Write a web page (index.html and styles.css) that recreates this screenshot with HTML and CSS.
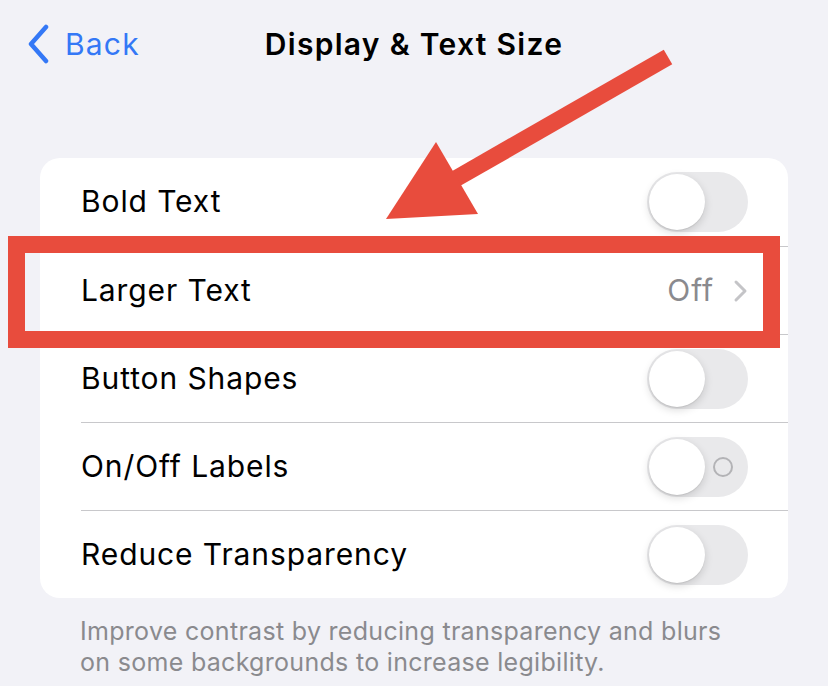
FILE: index.html
```html
<!DOCTYPE html>
<html lang="en">
<head>
    <meta charset="UTF-8">
    <meta name="viewport" content="width=device-width, initial-scale=1.0">
    <title>Display &amp; Text Size</title>
    <link rel="stylesheet" href="styles.css">
</head>
<body>
    <header class="nav">
        <a class="back" href="#">
            <svg class="back-icon" width="24" height="40" viewBox="0 0 24 40">
                <path d="M20 3 L5 20 L20 37" fill="none" stroke="#3478f6" stroke-width="4.5" stroke-linecap="round" stroke-linejoin="round"/>
            </svg>
            <span>Back</span>
        </a>
        <h1 class="title">Display &amp; Text Size</h1>
    </header>

    <section class="group">
        <div class="row">
            <div class="row-body">
                <span class="label">Bold Text</span>
                <span class="switch"><span class="knob"></span></span>
            </div>
        </div>
        <div class="row">
            <div class="row-body">
                <span class="label">Larger Text</span>
                <span class="detail">
                    <span class="value">Off</span>
                    <svg class="chevron" width="16" height="24" viewBox="0 0 16 24">
                        <path d="M3 3 L12 12 L3 21" fill="none" stroke="#c4c4c7" stroke-width="3" stroke-linecap="round" stroke-linejoin="round"/>
                    </svg>
                </span>
            </div>
        </div>
        <div class="row">
            <div class="row-body">
                <span class="label">Button Shapes</span>
                <span class="switch"><span class="knob"></span></span>
            </div>
        </div>
        <div class="row">
            <div class="row-body">
                <span class="label">On/Off Labels</span>
                <span class="switch"><span class="knob"></span><span class="off-mark"></span></span>
            </div>
        </div>
        <div class="row">
            <div class="row-body">
                <span class="label">Reduce Transparency</span>
                <span class="switch"><span class="knob"></span></span>
            </div>
        </div>
    </section>

    <p class="footnote">Improve contrast by reducing transparency and blurs on some backgrounds to increase legibility.</p>

    <!-- red markup drawn on top of the settings -->
    <div class="highlight"></div>
    <svg class="arrow" width="828" height="686" viewBox="0 0 828 686">
        <line x1="668" y1="57" x2="450" y2="182" stroke="#e84c3d" stroke-width="17"/>
        <polygon points="436,142 478,214 386,219" fill="#e84c3d"/>
    </svg>
</body>
</html>
```

FILE: styles.css
```css
body {
    margin: 0;
    background: #f2f2f7;
    font-family: Inter, "Noto Sans", sans-serif;
    color: #000;
    position: relative;
    height: 686px;
    overflow: hidden;
}
.nav {
    display: flex;
    align-items: center;
    justify-content: center;
    height: 90px;
    position: relative;
}
.back {
    position: absolute;
    left: 26px;
    top: 24px;
    display: flex;
    align-items: center;
    gap: 15px;
    color: #3478f6;
    text-decoration: none;
    font-size: 30px;
    letter-spacing: 1.2px;
}
.title {
    margin: 0 0 2px;
    font-size: 30px;
    font-weight: 600;
    letter-spacing: 1.3px;
}
.group {
    margin: 68px 40px 0;
    background: #fff;
    border-radius: 20px;
    overflow: hidden;
}
.row {
    padding-left: 41px;
}
.row-body {
    display: flex;
    align-items: center;
    justify-content: space-between;
    height: 88px;
    padding-right: 40px;
    box-sizing: border-box;
}
.row + .row .row-body {
    border-top: 1px solid #c8c8cb;
}
.label {
    font-size: 30px;
    letter-spacing: 0.9px;
    margin-top: -2px;
}
.detail {
    display: flex;
    align-items: center;
    gap: 19px;
    margin-right: -1px;
}
.value {
    font-size: 30px;
    letter-spacing: 0.9px;
    color: #8a8a8e;
    margin-top: -2px;
}
.switch {
    position: relative;
    width: 101px;
    height: 60px;
    border-radius: 30px;
    background: #e9e9eb;
}
.knob {
    position: absolute;
    left: 2px;
    top: 2px;
    width: 56px;
    height: 56px;
    border-radius: 50%;
    background: #fff;
    box-shadow: 0 3px 8px rgba(0, 0, 0, 0.15), 0 1px 1px rgba(0, 0, 0, 0.08);
}
.off-mark {
    position: absolute;
    right: 15px;
    top: 20px;
    width: 16px;
    height: 16px;
    border: 2px solid #b3b3b6;
    border-radius: 50%;
}
.footnote {
    margin: 18px 80px 0 80px;
    font-size: 25px;
    line-height: 31px;
    letter-spacing: 0.3px;
    color: #8a8a8e;
}
.highlight {
    position: absolute;
    left: 8px;
    top: 236px;
    width: 772px;
    height: 112px;
    box-sizing: border-box;
    border: 17px solid #e84c3d;
}
.arrow {
    position: absolute;
    left: 0;
    top: 0;
}
```
